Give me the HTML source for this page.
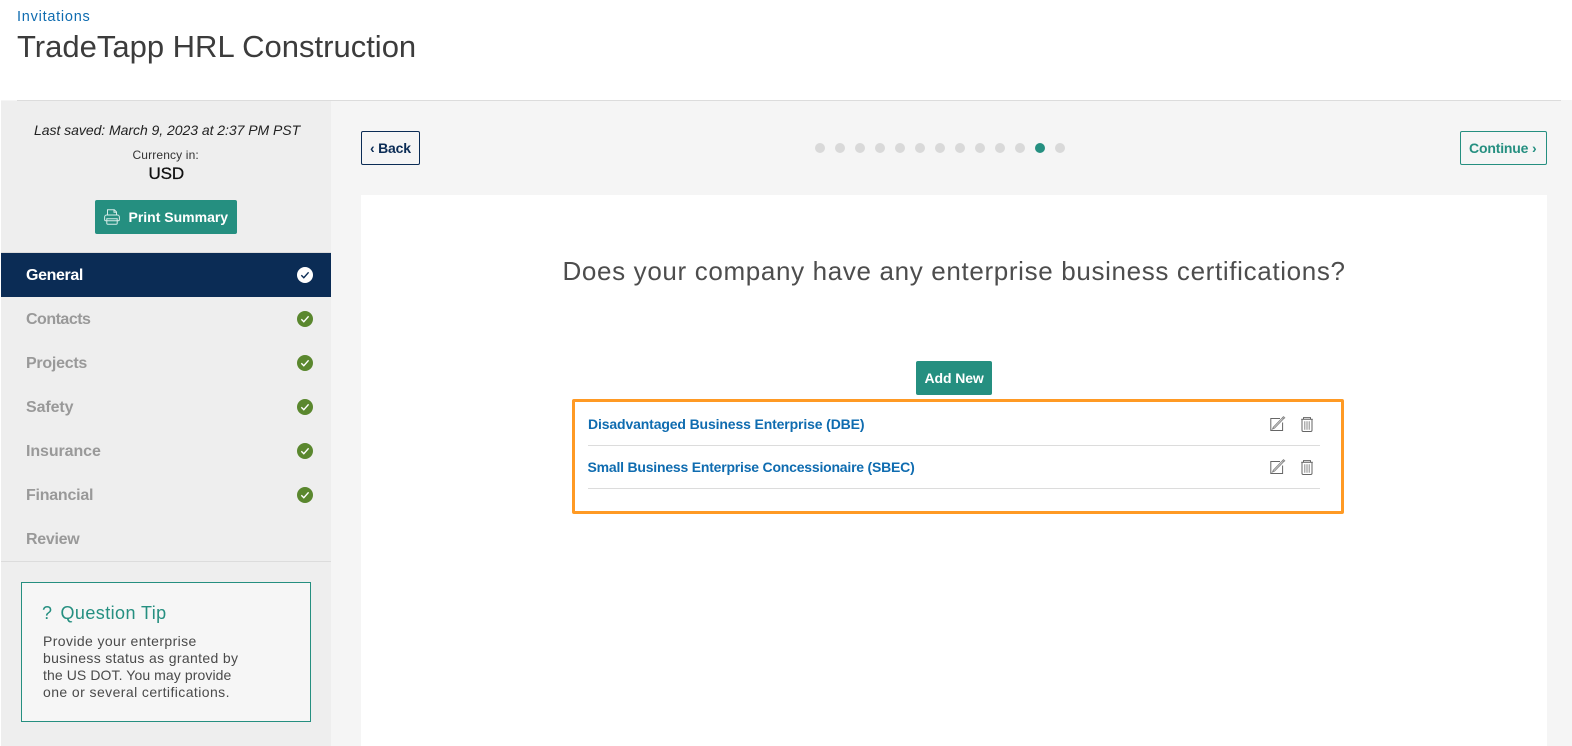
<!DOCTYPE html>
<html><head><meta charset="utf-8">
<style>
html,body{margin:0;padding:0;width:1572px;height:746px;overflow:hidden;background:#fff;}
body{position:relative;font-family:"Liberation Sans",sans-serif;}
.a{position:absolute;}
.t{position:absolute;white-space:nowrap;line-height:1;}
.dot{position:absolute;top:143px;width:10px;height:10px;border-radius:50%;background:#d9d9d9;}
.nav{position:absolute;left:26px;font-size:16px;font-weight:bold;color:#999;white-space:nowrap;line-height:1;}
.tip{position:absolute;left:43px;font-size:14px;color:#4a4a4a;white-space:nowrap;line-height:1;}
svg{position:absolute;overflow:visible;}
</style></head><body>
<div class="a" style="left:1px;top:100px;width:1571px;height:646px;background:#f5f5f5"></div>
<div class="a" style="left:17px;top:100px;width:1544px;height:1px;background:#dcdcdc"></div>
<div class="a" style="left:1px;top:101px;width:330px;height:645px;background:#eeeeee"></div>
<div class="a" style="left:361px;top:195px;width:1186px;height:551px;background:#fff"></div>

<div class="t" style="left:17px;top:10px;font-size:14.500px;color:#0f6cb0;letter-spacing:.75px">Invitations</div>
<div class="t" style="left:17px;top:31px;font-size:31px;color:#3c3c3c">TradeTapp HRL Construction</div>

<div class="t" style="left:34px;top:123px;font-size:14px;font-style:italic;color:#222;letter-spacing:-.04px">Last saved: March 9, 2023 at 2:37 PM PST</div>
<div class="t" style="left:132.500px;top:149px;font-size:12px;color:#333;letter-spacing:.14px">Currency in:</div>
<div class="t" style="left:148.500px;top:165px;font-size:17px;color:#111;letter-spacing:-.1px;-webkit-text-stroke:.3px #111">USD</div>

<div class="a" style="left:95px;top:200px;width:142px;height:34px;background:#258f80;border-radius:2px"></div>
<svg style="left:104px;top:209px" width="16" height="16" viewBox="0 0 16 16" fill="none" stroke="#d5ece8" stroke-width="1"><path d="M3.500 6V.7h6.800l2.200 2.200V6"/><path d="M10 .8V3.200h2.400"/><path d="M.6 8.200C.6 7 1.400 6 2.500 6h11c1.100 0 1.900 1 1.900 2.200v2.300c0 .8-.6 1.300-1.300 1.300H1.900c-.7 0-1.300-.5-1.300-1.300z"/><path d="M2.800 9.800v4.500c0 .6.400 1 1 1h8.400c.6 0 1-.4 1-1V9.800z"/></svg>
<div class="t" style="left:128.500px;top:210px;font-size:14px;font-weight:bold;color:#fff">Print Summary</div>

<div class="a" style="left:1px;top:252px;width:330px;height:1px;background:#dcdcdc"></div>
<div class="a" style="left:1px;top:253px;width:330px;height:44px;background:#0b2c55"></div>
<div class="nav" style="top:268px;color:#fff;letter-spacing:-.37px">General</div>
<div class="nav" style="top:312px;letter-spacing:-.5px">Contacts</div>
<div class="nav" style="top:356px;letter-spacing:-.26px">Projects</div>
<div class="nav" style="top:400px;letter-spacing:-.1px">Safety</div>
<div class="nav" style="top:444px;letter-spacing:-.09px">Insurance</div>
<div class="nav" style="top:488px;letter-spacing:-.24px">Financial</div>
<div class="nav" style="top:532px;letter-spacing:-.3px">Review</div>

<svg style="left:297px;top:267px" width="16" height="16" viewBox="0 0 16 16"><circle cx="8" cy="8" r="8" fill="#fff"/><path d="M4.300 8.300l2.500 2.400 4.800-5.400" fill="none" stroke="#0b2c55" stroke-width="1.400"/></svg>
<svg style="left:297px;top:311px" width="16" height="16" viewBox="0 0 16 16"><circle cx="8" cy="8" r="8" fill="#5a872e"/><path d="M4.300 8.300l2.500 2.400 4.800-5.400" fill="none" stroke="#fff" stroke-width="1.400"/></svg>
<svg style="left:297px;top:355px" width="16" height="16" viewBox="0 0 16 16"><circle cx="8" cy="8" r="8" fill="#5a872e"/><path d="M4.300 8.300l2.500 2.400 4.800-5.400" fill="none" stroke="#fff" stroke-width="1.400"/></svg>
<svg style="left:297px;top:399px" width="16" height="16" viewBox="0 0 16 16"><circle cx="8" cy="8" r="8" fill="#5a872e"/><path d="M4.300 8.300l2.500 2.400 4.800-5.400" fill="none" stroke="#fff" stroke-width="1.400"/></svg>
<svg style="left:297px;top:443px" width="16" height="16" viewBox="0 0 16 16"><circle cx="8" cy="8" r="8" fill="#5a872e"/><path d="M4.300 8.300l2.500 2.400 4.800-5.400" fill="none" stroke="#fff" stroke-width="1.400"/></svg>
<svg style="left:297px;top:487px" width="16" height="16" viewBox="0 0 16 16"><circle cx="8" cy="8" r="8" fill="#5a872e"/><path d="M4.300 8.300l2.500 2.400 4.800-5.400" fill="none" stroke="#fff" stroke-width="1.400"/></svg>

<div class="a" style="left:1px;top:561px;width:330px;height:1px;background:#dcdcdc"></div>

<div class="a" style="left:21px;top:582px;width:288px;height:138px;border:1px solid #258f80;background:#f6f6f6"></div>
<div class="t" style="left:42px;top:604px;font-size:18px;color:#258f80">?</div>
<div class="t" style="left:60.500px;top:604px;font-size:18px;color:#258f80;letter-spacing:.42px">Question Tip</div>
<div class="tip" style="top:634px;letter-spacing:.39px">Provide your enterprise</div>
<div class="tip" style="top:651px;letter-spacing:.35px">business status as granted by</div>
<div class="tip" style="top:668px;letter-spacing:.09px">the US DOT. You may provide</div>
<div class="tip" style="top:685px;letter-spacing:.42px">one or several certifications.</div>

<div class="a" style="left:361px;top:131px;width:57px;height:32px;border:1px solid #0b2c55;border-radius:2px"></div>
<div class="t" style="left:370px;top:141px;font-size:14px;font-weight:bold;color:#0b2c55;letter-spacing:-.2px">‹ Back</div>

<div class="dot" style="left:815px"></div>
<div class="dot" style="left:835px"></div>
<div class="dot" style="left:855px"></div>
<div class="dot" style="left:875px"></div>
<div class="dot" style="left:895px"></div>
<div class="dot" style="left:915px"></div>
<div class="dot" style="left:935px"></div>
<div class="dot" style="left:955px"></div>
<div class="dot" style="left:975px"></div>
<div class="dot" style="left:995px"></div>
<div class="dot" style="left:1015px"></div>
<div class="dot" style="left:1035px;background:#258f80"></div>
<div class="dot" style="left:1055px"></div>

<div class="a" style="left:1460px;top:131px;width:85px;height:32px;border:1px solid #258f80;border-radius:2px"></div>
<div class="t" style="left:1469px;top:141px;font-size:14px;font-weight:bold;color:#258f80;letter-spacing:-.17px">Continue ›</div>

<div class="t" style="left:562.500px;top:258px;font-size:26px;color:#4d4d4d;letter-spacing:.65px">Does your company have any enterprise business certifications?</div>

<div class="a" style="left:916px;top:361px;width:76px;height:34px;background:#258f80;border-radius:2px"></div>
<div class="t" style="left:924.500px;top:371px;font-size:14px;font-weight:bold;color:#fff;letter-spacing:-.1px">Add New</div>

<div class="a" style="left:572px;top:399px;width:766px;height:109px;border:3px solid #ff9a24;border-radius:2px"></div>
<div class="t" style="left:588px;top:417px;font-size:14px;font-weight:bold;color:#0f6cb0;letter-spacing:-.135px">Disadvantaged Business Enterprise (DBE)</div>
<div class="t" style="left:587.500px;top:460px;font-size:14px;font-weight:bold;color:#0f6cb0;letter-spacing:-.21px">Small Business Enterprise Concessionaire (SBEC)</div>
<div class="a" style="left:588px;top:445px;width:732px;height:1px;background:#dcdcdc"></div>
<div class="a" style="left:588px;top:488px;width:732px;height:1px;background:#dcdcdc"></div>

<svg style="left:1270px;top:416px" width="16" height="16" viewBox="0 0 16 16" fill="none" stroke="#666" stroke-width="1"><path d="M10 2.500H.8v12h11.800V6.500"/><path d="M3.500 11l-1 2 2-.900 9-9.400-1-1z" stroke="#888"/><path d="M12.500 1.700l1-1 1.200 1.100-1.200 1" stroke="#888"/></svg>
<svg style="left:1301px;top:417px" width="12" height="15" viewBox="0 0 12 15" fill="none" stroke="#666" stroke-width="1"><path d="M.2 2.300h11.600"/><path d="M2.500 2.300V.6h7v1.700"/><path d="M1 2.300v11c0 .8.500 1.200 1.200 1.200h7.600c.8 0 1.200-.4 1.200-1.200v-11"/><path d="M3.800 4.200v8.500M6 4.200v8.500M8.200 4.200v8.500" stroke="#888"/></svg>
<svg style="left:1270px;top:459px" width="16" height="16" viewBox="0 0 16 16" fill="none" stroke="#666" stroke-width="1"><path d="M10 2.500H.8v12h11.800V6.500"/><path d="M3.500 11l-1 2 2-.900 9-9.400-1-1z" stroke="#888"/><path d="M12.500 1.700l1-1 1.200 1.100-1.200 1" stroke="#888"/></svg>
<svg style="left:1301px;top:460px" width="12" height="15" viewBox="0 0 12 15" fill="none" stroke="#666" stroke-width="1"><path d="M.2 2.300h11.600"/><path d="M2.500 2.300V.6h7v1.700"/><path d="M1 2.300v11c0 .8.500 1.200 1.200 1.200h7.600c.8 0 1.200-.4 1.200-1.200v-11"/><path d="M3.800 4.200v8.500M6 4.200v8.500M8.200 4.200v8.500" stroke="#888"/></svg>
</body></html>
